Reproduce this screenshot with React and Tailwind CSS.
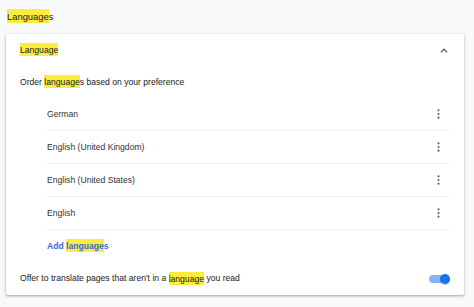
const Mark = ({ children }) => (
    <span className="bg-[#fbec3e] py-[1.5px]">{children}</span>
)

const Kebab = () => (
    <svg width="3" height="10" viewBox="0 0 3 10" className="text-[#5f6368]">
        <circle cx="1.5" cy="1.3" r="1.1" fill="currentColor" />
        <circle cx="1.5" cy="5" r="1.1" fill="currentColor" />
        <circle cx="1.5" cy="8.7" r="1.1" fill="currentColor" />
    </svg>
)

const languages = ["German", "English (United Kingdom)", "English (United States)", "English"]

const App = () => {
    return (
        <div className="w-[474px] h-[307px] bg-[#f8f9fa] overflow-hidden font-['Liberation_Sans',Arial,sans-serif] text-[#202124]">
            <div className="h-[34px] flex items-center px-[7px] text-[9.4px]">
                <span><Mark>Language</Mark>s</span>
            </div>

            <div className="ml-[6px] w-[458px] bg-white rounded-[2px] shadow-[0_1px_2px_rgba(60,64,67,0.3),0_1px_3px_1px_rgba(60,64,67,0.12)] text-[8.6px]">
                <div className="h-[32px] flex items-center justify-between pl-[14px] pr-[16px]">
                    <span><Mark>Language</Mark></span>
                    <svg width="8" height="5" viewBox="0 0 8 5" className="text-[#5f6368]">
                        <path d="M0.8 4.4 L4 1.2 L7.2 4.4" fill="none" stroke="currentColor" strokeWidth="1.3" />
                    </svg>
                </div>

                <div className="h-[32px] flex items-center pl-[14px]">
                    <span>Order <Mark>language</Mark>s based on your preference</span>
                </div>

                <div className="ml-[41px] mr-[14px]">
                    {languages.map((lang) => (
                        <div key={lang} className="h-[33px] flex items-center justify-between border-b border-[#f0f0f0] pr-[10px] text-[#333]">
                            <span>{lang}</span>
                            <Kebab />
                        </div>
                    ))}
                    <div className="h-[32px] flex items-center">
                        <span className="text-[#3367d6] font-semibold">Add <Mark>language</Mark>s</span>
                    </div>
                </div>

                <div className="h-[33px] flex items-center justify-between pl-[14px] pr-[14px]">
                    <span>Offer to translate pages that aren't in a <Mark>language</Mark> you read</span>
                    <div className="relative w-[21px] h-[10px] flex items-center">
                        <div className="w-[19px] h-[8px] rounded-full bg-[#8ab4f8]" />
                        <div className="absolute right-0 w-[10px] h-[10px] rounded-full bg-[#1a73e8] shadow-[0_1px_1px_rgba(0,0,0,0.25)]" />
                    </div>
                </div>
            </div>
        </div>
    )
}

export default App
